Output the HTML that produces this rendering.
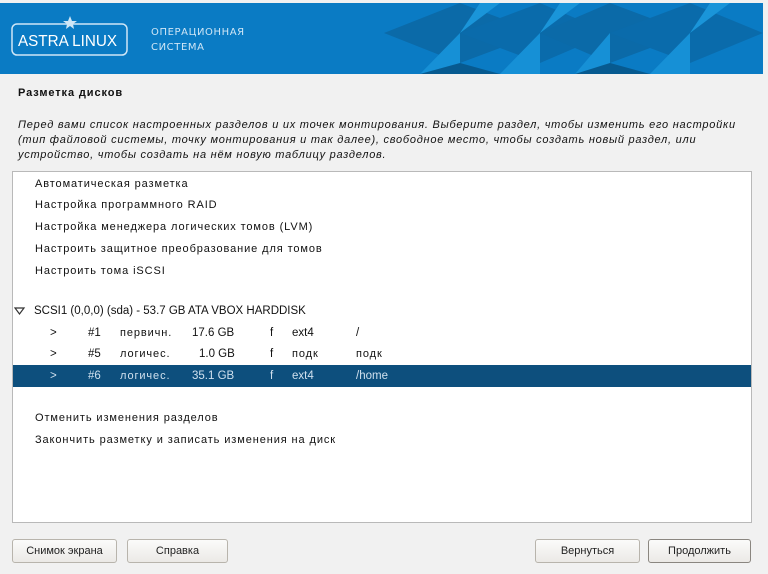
<!DOCTYPE html>
<html><head><meta charset="utf-8"><style>
*{margin:0;padding:0;box-sizing:border-box}
body{width:768px;height:572px;background:#f1f1f1;font-family:"Liberation Sans","DejaVu Sans",sans-serif;position:relative;overflow:hidden;color:#111}
.a{position:absolute;white-space:nowrap}
#ban{position:absolute;left:0;top:3px;width:763px;height:71px;background:#0a7bc4;overflow:hidden}
.t{font-size:11px;letter-spacing:0.9px}
.btn{position:absolute;top:539px;height:24px;border:1px solid #b8b4ac;border-radius:3px;background:linear-gradient(#fbfbfa,#ebe9e6);font-size:11px;text-align:center;line-height:23px;color:#222}
.L{position:absolute;left:0;top:2px;width:768px;height:572px}
</style></head><body>
<div id="ban">
<svg width="763" height="71" style="position:absolute;left:0;top:0">
<g>
<polygon points="384,30 460,0 540,30 460,60" fill="#0b6aa8"/>
<polygon points="460,30 540,0 610,30 540,60" fill="#0a6bab"/>
<polygon points="540,30 610,0 690,30 610,60" fill="#0b6aa8"/>
<polygon points="610,30 690,0 763,30 690,60" fill="#0a6bab"/>
<polygon points="460,30 420,71 460,71" fill="#1690d6"/>
<polygon points="540,30 500,71 540,71" fill="#1690d6"/>
<polygon points="610,30 575,71 610,71" fill="#1690d6"/>
<polygon points="690,30 650,71 690,71" fill="#1690d6"/>
<polygon points="460,30 480,0 500,0" fill="#1a95d9"/>
<polygon points="540,30 560,0 580,0" fill="#1a95d9"/>
<polygon points="690,30 710,0 730,0" fill="#1a95d9"/>
<polygon points="460,60 500,71 420,71" fill="#075a90"/>
<polygon points="610,60 650,71 575,71" fill="#075a90"/>
</g>
<rect x="12" y="21" width="115" height="31" rx="5" fill="none" stroke="#cfe6f6" stroke-width="1.5"/>
<polygon points="70,13 72,18 77,18 73,21 74,26 70,23 66,26 67,21 63,18 68,18" fill="#cfe6f6"/>
<text x="18" y="43" font-family="Liberation Sans" font-size="16" fill="#fff" textLength="99" lengthAdjust="spacingAndGlyphs">ASTRA LINUX</text>
<text x="151" y="32" font-family="DejaVu Sans" font-size="10" fill="#cfe6f6" letter-spacing="0.6">ОПЕРАЦИОННАЯ</text>
<text x="151" y="47" font-family="DejaVu Sans" font-size="10" fill="#cfe6f6" letter-spacing="0.6">СИСТЕМА</text>
</svg>
</div>
<div class="a t" style="left:18px;top:87px;font-weight:bold">Разметка дисков</div>
<div class="a t" style="left:18px;top:118px;font-style:italic;line-height:15px;letter-spacing:0.75px">Перед вами список настроенных разделов и их точек монтирования. Выберите раздел, чтобы изменить его настройки<br>(тип файловой системы, точку монтирования и так далее), свободное место, чтобы создать новый раздел, или<br>устройство, чтобы создать на нём новую таблицу разделов.</div>
<div class="a" style="left:12px;top:171px;width:740px;height:352px;background:#fff;border:1px solid #b9b9b9"></div>
<div class="a" style="left:13px;top:365px;width:738px;height:22px;background:#0d4f7d"></div>
<div class="L">
<div class="a t" style="left:35px;top:176px">Автоматическая разметка</div>
<div class="a t" style="left:35px;top:197px">Настройка программного RAID</div>
<div class="a t" style="left:35px;top:219px">Настройка менеджера логических томов (LVM)</div>
<div class="a t" style="left:35px;top:241px">Настроить защитное преобразование для томов</div>
<div class="a t" style="left:35px;top:263px">Настроить тома iSCSI</div>
<svg class="a" style="left:14px;top:304px" width="12" height="10"><polygon points="1,2 10,2 5.5,8" fill="none" stroke="#333" stroke-width="1.2"/></svg>
<div class="a" style="left:34px;top:303px;font-size:11.5px">SCSI1 (0,0,0) (sda) - 53.7 GB ATA VBOX HARDDISK</div>
<div style="font-size:11.5px">
<div class="a" style="left:50px;top:325px">&gt;</div><div class="a" style="left:88px;top:325px">#1</div><div class="a t" style="left:120px;top:325px">первичн.</div><div class="a" style="left:192px;top:325px">17.6 GB</div><div class="a" style="left:270px;top:325px">f</div><div class="a" style="left:292px;top:325px">ext4</div><div class="a" style="left:356px;top:325px">/</div>
<div class="a" style="left:50px;top:346px">&gt;</div><div class="a" style="left:88px;top:346px">#5</div><div class="a t" style="left:120px;top:346px">логичес.</div><div class="a" style="left:199px;top:346px">1.0 GB</div><div class="a" style="left:270px;top:346px">f</div><div class="a t" style="left:292px;top:346px">подк</div><div class="a t" style="left:356px;top:346px">подк</div>
<div style="color:#cfe0ee">
<div class="a" style="left:50px;top:368px">&gt;</div><div class="a" style="left:88px;top:368px">#6</div><div class="a t" style="left:120px;top:368px">логичес.</div><div class="a" style="left:192px;top:368px">35.1 GB</div><div class="a" style="left:270px;top:368px">f</div><div class="a" style="left:292px;top:368px">ext4</div><div class="a" style="left:356px;top:368px">/home</div>
</div></div>
<div class="a t" style="left:35px;top:410px">Отменить изменения разделов</div>
<div class="a t" style="left:35px;top:432px">Закончить разметку и записать изменения на диск</div>
</div>
<div class="btn" style="left:12px;width:105px">Снимок экрана</div>
<div class="btn" style="left:127px;width:101px">Справка</div>
<div class="btn" style="left:535px;width:105px">Вернуться</div>
<div class="btn" style="left:648px;width:103px;border-color:#8a8680">Продолжить</div>
</body></html>
